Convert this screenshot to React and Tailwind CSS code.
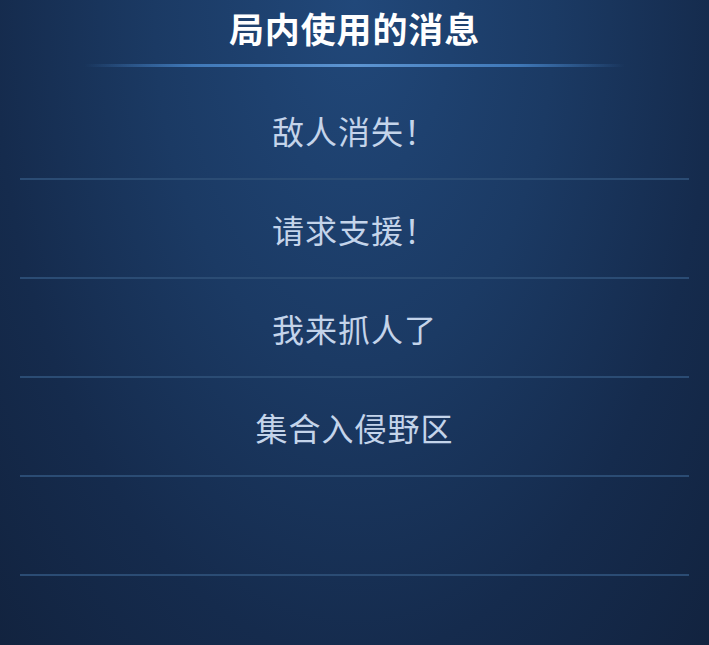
const messages = ['敌人消失！', '请求支援！', '我来抓人了', '集合入侵野区', '']

const MessageRow = ({ label }) => (
  <div className="h-[99px] mx-5 flex items-center justify-center border-b-2 border-[#2b4c74]">
    <span className="text-[32px] leading-none text-[#c4d4ea] tracking-[0.03em]">{label}</span>
  </div>
)

export default function App() {
  return (
    <main
      className="w-[709px] h-[645px] overflow-hidden bg-[radial-gradient(ellipse_at_50%_0%,#21487a_0%,#1b3a64_40%,#152b4d_72%,#12233f_100%)]"
      style={{ fontFamily: '"Noto Sans CJK SC", "Noto Sans", sans-serif' }}>
      <header className="h-[81px] flex flex-col items-center">
        <h1 className="mt-[8px] text-[35px] leading-[40px] font-bold text-white tracking-wide">局内使用的消息</h1>
        <div className="mt-[16px] w-[540px] h-[3px] bg-[linear-gradient(90deg,transparent,#3f78b8_20%,#5d95d2_50%,#3f78b8_80%,transparent)]" />
      </header>
      <div className="flex flex-col">
        {messages.map((label, i) => (
          <MessageRow key={i} label={label} />
        ))}
      </div>
    </main>
  )
}
